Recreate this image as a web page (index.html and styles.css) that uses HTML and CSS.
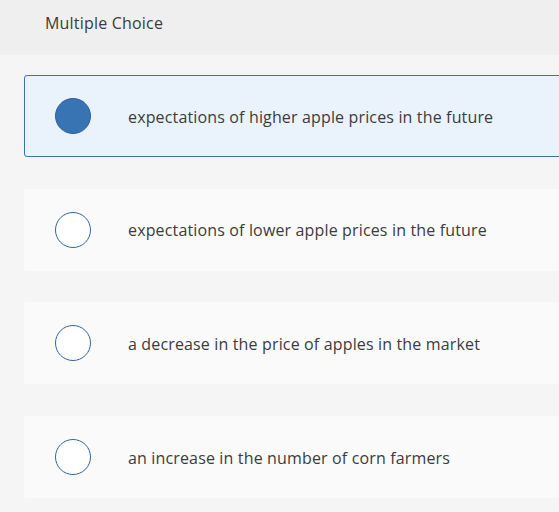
FILE: index.html
```html
<!DOCTYPE html>
<html>
<head>
<meta charset="utf-8">
<link rel="stylesheet" href="styles.css">
</head>
<body>
<header class="head">Multiple Choice</header>
<main class="choices">
  <div class="choice selected">
    <span class="radio"></span>
    <span class="label">expectations of higher apple prices in the future</span>
  </div>
  <div class="choice">
    <span class="radio"></span>
    <span class="label">expectations of lower apple prices in the future</span>
  </div>
  <div class="choice">
    <span class="radio"></span>
    <span class="label">a decrease in the price of apples in the market</span>
  </div>
  <div class="choice">
    <span class="radio"></span>
    <span class="label">an increase in the number of corn farmers</span>
  </div>
</main>
</body>
</html>
```
FILE: styles.css
```css
html, body {
  margin: 0;
  padding: 0;
  background: #f5f5f5;
  font-family: "Open Sans", "Lato", sans-serif;
  color: #3a3a3a;
  overflow: hidden;
}
.head {
  height: 55px;
  box-sizing: border-box;
  background: #efefef;
  padding: 12px 0 0 45px;
  font-size: 16px;
  letter-spacing: 0.2px;
  color: #3b3b3b;
}
.choices {
  display: flex;
  flex-direction: column;
  gap: 31.7px;
  padding: 20px 0 0 24px;
}
.choice {
  width: 560px;
  height: 82px;
  box-sizing: border-box;
  display: flex;
  align-items: center;
  background: #fafafa;
  border: 1px solid transparent;
  border-radius: 3px;
  padding-left: 30px;
}
.choice.selected {
  background: #eaf2fc;
  border-color: #3b74b5;
}
.radio {
  width: 36px;
  height: 36px;
  box-sizing: border-box;
  border-radius: 50%;
  border: 1.5px solid #2f65a0;
  background: #fff;
  flex: none;
}
.selected .radio {
  background: #3873b4;
  border-color: #2e5f98;
}
.label {
  margin-left: 37px;
  font-size: 16px;
  letter-spacing: 0.15px;
  color: #3c3c3c;
  padding-top: 1px;
}
```
